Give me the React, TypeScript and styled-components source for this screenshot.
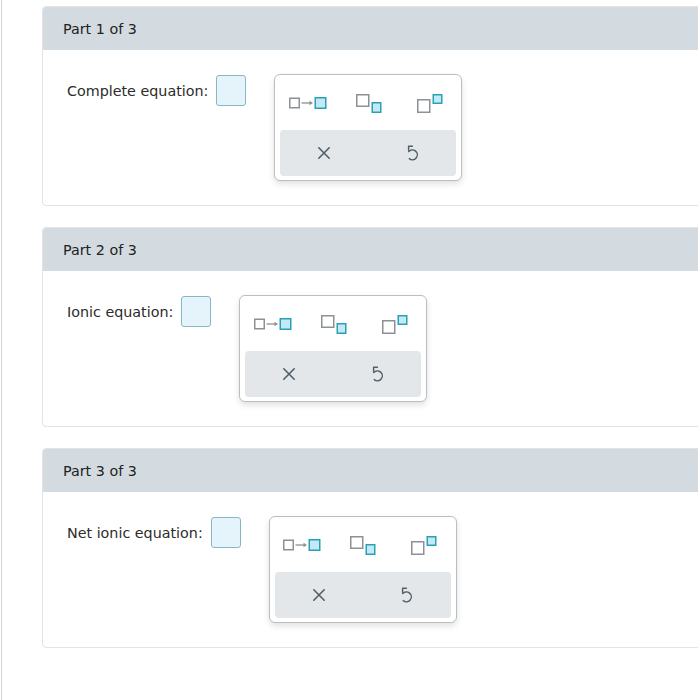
import React from "react";
import styled, { createGlobalStyle } from "styled-components";

const GlobalStyle = createGlobalStyle`
  html, body {
    margin: 0;
    padding: 0;
    background: #ffffff;
    overflow: hidden;
  }
  body {
    font-family: "DejaVu Sans", Verdana, sans-serif;
    color: #2b2b2b;
  }
`;

const Page = styled.div`
  margin-left: 1px;
  border-left: 1px solid #d3d3d3;
  min-height: 700px;
  box-sizing: border-box;
  padding: 6px 0 0 40px;
  display: flex;
  flex-direction: column;
  gap: 21px;
`;

const Card = styled.section`
  border: 1px solid #e1e3e5;
  border-radius: 4px;
  margin-right: -6px;
  background: #ffffff;
`;

const CardHeader = styled.header`
  height: 43px;
  background: #d4dbe0;
  border-radius: 3px 3px 0 0;
  padding-left: 20px;
  display: flex;
  align-items: center;
  font-size: 14.3px;
  color: #222;
`;

const CardBody = styled.div`
  padding: 24px 24px 24px 24px;
  display: flex;
  align-items: flex-start;
`;

const Prompt = styled.div`
  display: flex;
  align-items: center;
  gap: 8px;
  height: 31px;
  font-size: 14.3px;
  color: #2b2b2b;
  padding-top: 1px;
`;

const AnswerBox = styled.div`
  width: 30px;
  height: 31px;
  box-sizing: border-box;
  border: 1.5px solid #86b7c5;
  background: #e5f4fa;
  border-radius: 3px;
  margin-top: -1px;
`;

const Palette = styled.div`
  margin-left: 28px;
  width: 188px;
  box-sizing: border-box;
  border: 1px solid #b8bec2;
  border-radius: 6px;
  background: #ffffff;
  box-shadow: 0 3px 6px rgba(0, 0, 0, 0.12);
  padding-bottom: 4px;
`;

const ToolRow = styled.div`
  height: 55px;
  display: grid;
  grid-template-columns: repeat(3, 61px);
  padding: 0 2px;
`;

const ToolButton = styled.button`
  border: none;
  background: none;
  padding: 1px 0 0 0;
  display: flex;
  align-items: center;
  justify-content: center;
  cursor: pointer;
`;

const ActionBar = styled.div`
  margin: 0 5px;
  height: 46px;
  background: #e3e7ea;
  border-radius: 4px;
  display: grid;
  grid-template-columns: 1fr 1fr;
`;

const ActionButton = styled.button`
  border: none;
  background: none;
  padding: 0;
  display: flex;
  align-items: center;
  justify-content: center;
  cursor: pointer;
`;

const GRAY = "#8c9195";
const TEAL = "#2aa0b6";
const TEAL_FILL = "#c3eaf4";
const ICON_DARK = "#505e67";

const ArrowIcon = () => (
  <svg width="38" height="12" viewBox="0 0 38 12">
    <rect x="0.75" y="1.25" width="9.5" height="9.5" fill="#fff" stroke={GRAY} strokeWidth="1.5" />
    <line x1="12.5" y1="6" x2="21" y2="6" stroke={GRAY} strokeWidth="1.3" />
    <polygon points="20.5,3.8 24,6 20.5,8.2" fill={GRAY} />
    <rect x="26.25" y="0.75" width="10.5" height="10.5" fill={TEAL_FILL} stroke={TEAL} strokeWidth="1.5" />
  </svg>
);

const SubscriptIcon = () => (
  <svg width="26" height="19" viewBox="0 0 26 19">
    <rect x="0.75" y="0.75" width="12" height="11.5" fill="#fff" stroke={GRAY} strokeWidth="1.5" />
    <rect x="16.25" y="8.75" width="8.5" height="9.5" fill={TEAL_FILL} stroke={TEAL} strokeWidth="1.5" />
  </svg>
);

const SuperscriptIcon = () => (
  <svg width="26" height="19" viewBox="0 0 26 19">
    <rect x="0.75" y="5.75" width="12" height="12.5" fill="#fff" stroke={GRAY} strokeWidth="1.5" />
    <rect x="16.25" y="0.75" width="8.5" height="8.5" fill={TEAL_FILL} stroke={TEAL} strokeWidth="1.5" />
  </svg>
);

const ClearIcon = () => (
  <svg width="14" height="14" viewBox="0 0 14 14">
    <path d="M1.8 1.8 L12.2 12.2 M12.2 1.8 L1.8 12.2" stroke={ICON_DARK} strokeWidth="1.6" strokeLinecap="round" />
  </svg>
);

const UndoIcon = () => (
  <svg width="15" height="18" viewBox="0 0 15 18">
    <path
      d="M7.4 2.2 L3.6 2.2 L3.6 6.2"
      stroke={ICON_DARK}
      strokeWidth="1.45"
      strokeLinecap="round"
      strokeLinejoin="round"
      fill="none"
    />
    <path
      d="M3.7 7.6 A4.9 4.9 0 1 1 4.3 14.6"
      stroke={ICON_DARK}
      strokeWidth="1.45"
      strokeLinecap="round"
      fill="none"
    />
  </svg>
);

type PartProps = { index: number; label: string };

const Part = ({ index, label }: PartProps) => (
  <Card>
    <CardHeader>Part {index} of 3</CardHeader>
    <CardBody>
      <Prompt>
        <span>{label}</span>
        <AnswerBox />
      </Prompt>
      <Palette>
        <ToolRow>
          <ToolButton aria-label="reaction arrow">
            <ArrowIcon />
          </ToolButton>
          <ToolButton aria-label="subscript">
            <SubscriptIcon />
          </ToolButton>
          <ToolButton aria-label="superscript">
            <SuperscriptIcon />
          </ToolButton>
        </ToolRow>
        <ActionBar>
          <ActionButton aria-label="clear">
            <ClearIcon />
          </ActionButton>
          <ActionButton aria-label="undo">
            <UndoIcon />
          </ActionButton>
        </ActionBar>
      </Palette>
    </CardBody>
  </Card>
);

export default function App() {
  return (
    <>
      <GlobalStyle />
      <Page>
        <Part index={1} label="Complete equation:" />
        <Part index={2} label="Ionic equation:" />
        <Part index={3} label="Net ionic equation:" />
      </Page>
    </>
  );
}
